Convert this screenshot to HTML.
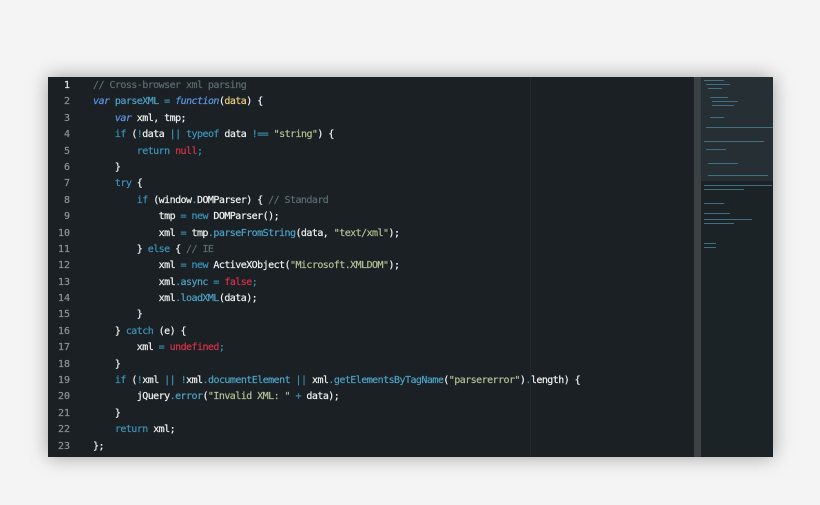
<!DOCTYPE html>
<html><head><style>
body{margin:0;width:820px;height:505px;background:#f4f4f4;overflow:hidden;position:relative}
#ed{position:absolute;left:48px;top:77px;width:725px;height:380px;background:#1a2023;box-shadow:0 0 18px rgba(0,0,0,.35);overflow:hidden}
#ruler{position:absolute;left:482px;top:0;width:1px;height:380px;background:#232a2d}
#code{position:absolute;left:0;top:0;font-family:"DejaVu Sans Mono","Liberation Mono",monospace;font-size:10px;letter-spacing:-0.55px;line-height:16.4px;color:#eef1f1;white-space:pre;-webkit-text-stroke:0.2px}
.l{height:16.4px}
.n{display:inline-block;width:22px;text-align:right;color:#8a9497;margin-right:23px;letter-spacing:0}
.c{color:#5c6d73}.k{color:#3d93b8}.v{color:#5d95e6;font-style:italic}.s{color:#b3bf96}.r{color:#d3324a}.m{color:#4ea0c6}.y{color:#ebce7c}
#mini{position:absolute;left:646px;top:0;width:79px;height:380px;background:#1b2326}
#sb{position:absolute;left:646px;top:0;width:7px;height:380px;background:#3c4244}
#mh{position:absolute;left:653px;top:0;width:72px;height:104px;background:#263034}
.ml{position:absolute;height:1px;background:#4a7f99;opacity:.8}
</style></head><body>
<div id="ed">
<div id="ruler"></div>
<div id="code" style="top:0px"><div class="l" style="padding-top:1px"><span class="n" style="color:#e6eaea">1</span><span class="c">// Cross-browser xml parsing</span></div><div class="l"><span class="n">2</span><span class="v">var</span> <span class="m">parseXML</span> <span class="k">=</span> <span class="v">function</span>(<span class="y">data</span>) {</div><div class="l"><span class="n">3</span>    <span class="v">var</span> xml, tmp;</div><div class="l"><span class="n">4</span>    <span class="k">if</span> (<span class="k">!</span>data <span class="k">||</span> <span class="k">typeof</span> data <span class="k">!==</span> <span class="s">"string"</span>) {</div><div class="l"><span class="n">5</span>        <span class="k">return</span> <span class="r">null</span><span class="k">;</span></div><div class="l"><span class="n">6</span>    }</div><div class="l"><span class="n">7</span>    <span class="k">try</span> {</div><div class="l"><span class="n">8</span>        <span class="k">if</span> (window<span class="k">.</span>DOMParser) { <span class="c">// Standard</span></div><div class="l"><span class="n">9</span>            tmp <span class="k">=</span> <span class="k">new</span> DOMParser();</div><div class="l"><span class="n">10</span>            xml <span class="k">=</span> tmp<span class="k">.</span><span class="m">parseFromString</span>(data, <span class="s">"text/xml"</span>);</div><div class="l"><span class="n">11</span>        } <span class="k">else</span> { <span class="c">// IE</span></div><div class="l"><span class="n">12</span>            xml <span class="k">=</span> <span class="k">new</span> ActiveXObject(<span class="s">"Microsoft.XMLDOM"</span>);</div><div class="l"><span class="n">13</span>            xml<span class="k">.</span><span class="m">async</span> <span class="k">=</span> <span class="r">false</span><span class="k">;</span></div><div class="l"><span class="n">14</span>            xml<span class="k">.</span><span class="m">loadXML</span>(data);</div><div class="l"><span class="n">15</span>        }</div><div class="l"><span class="n">16</span>    } <span class="k">catch</span> (e) {</div><div class="l"><span class="n">17</span>        xml <span class="k">=</span> <span class="r">undefined</span><span class="k">;</span></div><div class="l"><span class="n">18</span>    }</div><div class="l"><span class="n">19</span>    <span class="k">if</span> (<span class="k">!</span>xml <span class="k">||</span> <span class="k">!</span>xml<span class="k">.</span><span class="m">documentElement</span> <span class="k">||</span> xml<span class="k">.</span><span class="m">getElementsByTagName</span>(<span class="s">"parsererror"</span>)<span class="k">.</span>length) {</div><div class="l"><span class="n">20</span>        jQuery<span class="k">.</span><span class="m">error</span>(<span class="s">"Invalid XML: "</span> <span class="k">+</span> data);</div><div class="l"><span class="n">21</span>    }</div><div class="l"><span class="n">22</span>    <span class="k">return</span> xml;</div><div class="l"><span class="n">23</span>};</div></div>
<div id="mini"></div><div id="sb"></div><div id="mh"></div>
<div class="ml" style="left:656px;top:3px;width:20px"></div>
<div class="ml" style="left:658px;top:7px;width:24px"></div>
<div class="ml" style="left:660px;top:11px;width:14px"></div>
<div class="ml" style="left:662px;top:20px;width:18px"></div>
<div class="ml" style="left:664px;top:24px;width:26px"></div>
<div class="ml" style="left:664px;top:28px;width:22px"></div>
<div class="ml" style="left:662px;top:40px;width:14px"></div>
<div class="ml" style="left:658px;top:50px;width:70px"></div>
<div class="ml" style="left:656px;top:64px;width:60px"></div>
<div class="ml" style="left:658px;top:72px;width:20px"></div>
<div class="ml" style="left:660px;top:86px;width:30px"></div>
<div class="ml" style="left:660px;top:98px;width:60px"></div>
<div class="ml" style="left:656px;top:108px;width:68px"></div>
<div class="ml" style="left:656px;top:112px;width:40px"></div>
<div class="ml" style="left:656px;top:126px;width:20px"></div>
<div class="ml" style="left:656px;top:136px;width:26px"></div>
<div class="ml" style="left:656px;top:142px;width:48px"></div>
<div class="ml" style="left:656px;top:146px;width:30px"></div>
<div class="ml" style="left:656px;top:166px;width:12px"></div>
<div class="ml" style="left:656px;top:170px;width:12px"></div>
</div>
</body></html>
